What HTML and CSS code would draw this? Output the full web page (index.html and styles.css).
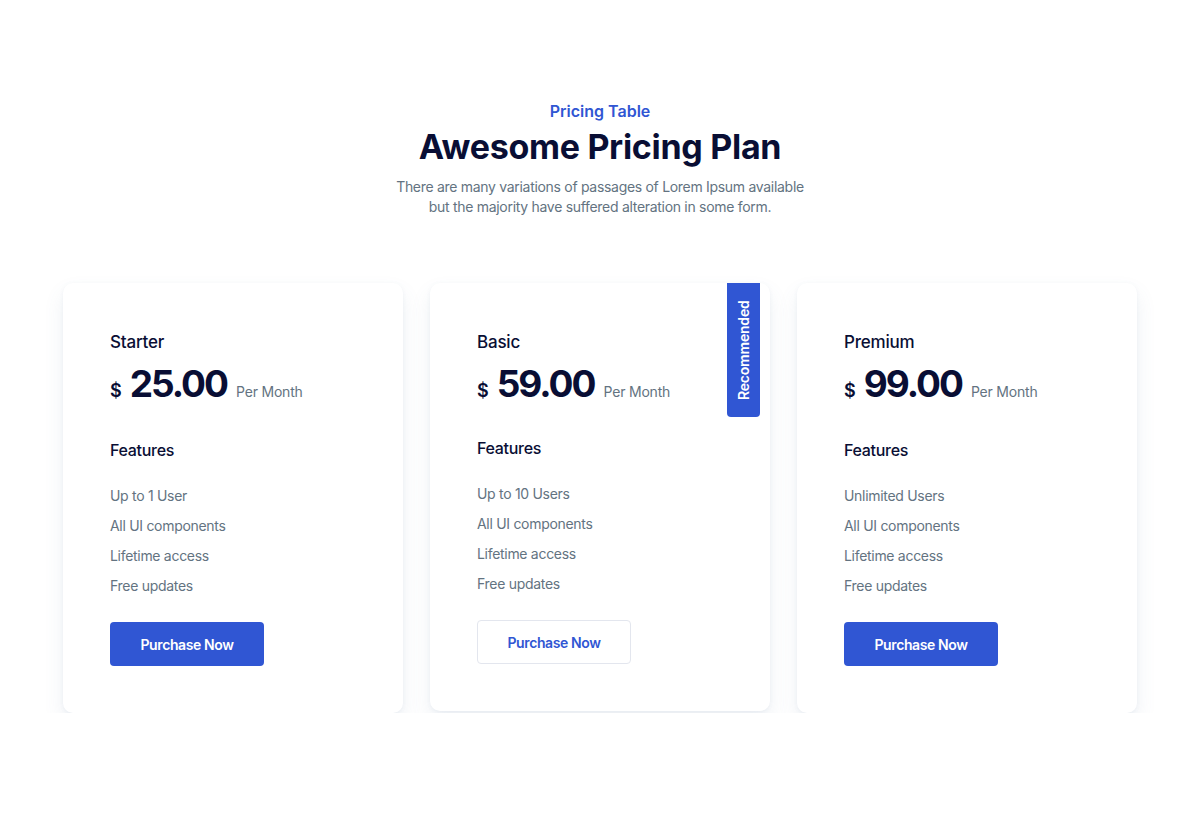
FILE: index.html
```html
<!DOCTYPE html>
<html lang="en">
<head>
<meta charset="utf-8">
<title>Pricing</title>
<link rel="stylesheet" href="styles.css">
</head>
<body>
<section class="pricing">
  <header class="intro">
    <span class="eyebrow">Pricing Table</span>
    <h1 class="title">Awesome Pricing Plan</h1>
    <p class="lead">There are many variations of passages of Lorem Ipsum available<br>but the majority have suffered alteration in some form.</p>
  </header>
  <div class="cards">
    <div class="card">
      <h3 class="plan">Starter</h3>
      <div class="price"><span class="cur">$</span><span class="amount">25.00</span><span class="per">Per Month</span></div>
      <h4 class="feat-title">Features</h4>
      <ul class="features">
        <li>Up to 1 User</li>
        <li>All UI components</li>
        <li>Lifetime access</li>
        <li>Free updates</li>
      </ul>
      <a class="btn btn-solid" href="#">Purchase Now</a>
    </div>
    <div class="card card-featured">
      <span class="badge">Recommended</span>
      <h3 class="plan">Basic</h3>
      <div class="price"><span class="cur">$</span><span class="amount">59.00</span><span class="per">Per Month</span></div>
      <h4 class="feat-title">Features</h4>
      <ul class="features">
        <li>Up to 10 Users</li>
        <li>All UI components</li>
        <li>Lifetime access</li>
        <li>Free updates</li>
      </ul>
      <a class="btn btn-outline" href="#">Purchase Now</a>
    </div>
    <div class="card">
      <h3 class="plan">Premium</h3>
      <div class="price"><span class="cur">$</span><span class="amount">99.00</span><span class="per">Per Month</span></div>
      <h4 class="feat-title">Features</h4>
      <ul class="features">
        <li>Unlimited Users</li>
        <li>All UI components</li>
        <li>Lifetime access</li>
        <li>Free updates</li>
      </ul>
      <a class="btn btn-solid" href="#">Purchase Now</a>
    </div>
  </div>
</section>
</body>
</html>
```
FILE: styles.css
```css
* { box-sizing: border-box; }
html, body { margin: 0; padding: 0; background: #ffffff; }
body {
  font-family: Inter, "Noto Sans", sans-serif;
  color: #090e34;
}
.pricing {
  padding-top: 99px;
}
.intro {
  display: flex;
  flex-direction: column;
  align-items: center;
  text-align: center;
}
.eyebrow {
  font-size: 16px;
  line-height: 24px;
  font-weight: 600;
  color: #3056d3;
}
.title {
  margin: 4px 0 0;
  font-size: 34px;
  line-height: 40px;
  font-weight: 700;
  color: #090e34;
  letter-spacing: -0.3px;
}
.lead {
  margin: 10px 0 0;
  font-size: 14px;
  line-height: 20px;
  letter-spacing: -0.3px;
  color: #637381;
}
.cards {
  display: grid;
  grid-template-columns: repeat(3, 340px);
  column-gap: 27px;
  justify-content: center;
  align-items: start;
  margin-top: 66px;
}
.card {
  position: relative;
  background: #ffffff;
  border-radius: 10px;
  padding: 47px 47px 47px;
  box-shadow: 0 10px 20px rgba(92, 115, 160, 0.1), 0 1px 4px rgba(92, 115, 160, 0.07);
}
.plan {
  margin: 0;
  font-size: 17px;
  line-height: 24px;
  font-weight: 500;
  color: #090e34;
  letter-spacing: -0.2px;
}
.price {
  display: flex;
  align-items: baseline;
  margin-top: 6px;
  height: 47px;
}
.card-featured .price { height: 45px; }
.cur {
  font-size: 18px;
  font-weight: 600;
  margin-right: 8px;
  color: #090e34;
}
.amount {
  font-size: 37px;
  line-height: 47px;
  font-weight: 700;
  color: #090e34;
  letter-spacing: -2px;
}
.per {
  margin-left: 9px;
  font-size: 14px;
  color: #637381;
  letter-spacing: -0.2px;
}
.feat-title {
  margin: 31px 0 0;
  font-size: 16px;
  line-height: 24px;
  font-weight: 500;
  color: #090e34;
  letter-spacing: -0.3px;
}
.features {
  list-style: none;
  margin: 24px 0 0;
  padding: 0;
  display: flex;
  flex-direction: column;
  gap: 10px;
}
.features li {
  font-size: 14px;
  line-height: 20px;
  color: #637381;
  letter-spacing: -0.3px;
}
.btn {
  display: inline-flex;
  align-items: center;
  justify-content: center;
  width: 154px;
  height: 44px;
  margin-top: 26px;
  border-radius: 4px;
  font-size: 14px;
  font-weight: 600;
  letter-spacing: -0.4px;
  text-decoration: none;
}
.btn-solid {
  background: #3056d3;
  color: #ffffff;
}
.btn-outline {
  background: #ffffff;
  color: #3056d3;
  border: 1px solid #e3e6ee;
}
.badge {
  position: absolute;
  top: 0;
  right: 10px;
  width: 33px;
  height: 134px;
  background: #3056d3;
  color: #ffffff;
  display: flex;
  align-items: center;
  justify-content: center;
  writing-mode: vertical-rl;
  transform: rotate(180deg);
  border-radius: 4px 4px 0 0;
  font-size: 14px;
  font-weight: 600;
  letter-spacing: -0.2px;
}
```
